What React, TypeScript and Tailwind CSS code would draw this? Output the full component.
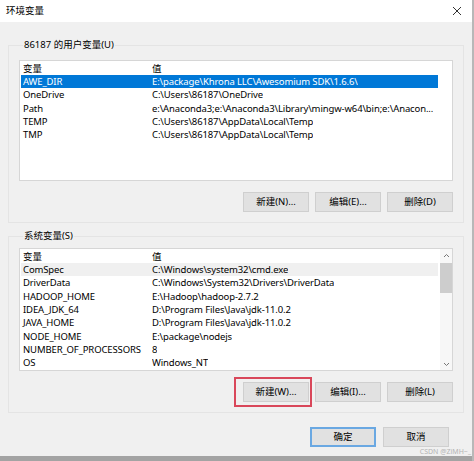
import React from 'react'

type Row = { name: string; value: string }

const USER_VARS: Row[] = [
  { name: 'AWE_DIR', value: 'E:\\package\\Khrona LLC\\Awesomium SDK\\1.6.6\\' },
  { name: 'OneDrive', value: 'C:\\Users\\86187\\OneDrive' },
  { name: 'Path', value: 'e:\\Anaconda3;e:\\Anaconda3\\Library\\mingw-w64\\bin;e:\\Anacon...' },
  { name: 'TEMP', value: 'C:\\Users\\86187\\AppData\\Local\\Temp' },
  { name: 'TMP', value: 'C:\\Users\\86187\\AppData\\Local\\Temp' },
]

const SYSTEM_VARS: Row[] = [
  { name: 'ComSpec', value: 'C:\\Windows\\system32\\cmd.exe' },
  { name: 'DriverData', value: 'C:\\Windows\\System32\\Drivers\\DriverData' },
  { name: 'HADOOP_HOME', value: 'E:\\Hadoop\\hadoop-2.7.2' },
  { name: 'IDEA_JDK_64', value: 'D:\\Program Files\\Java\\jdk-11.0.2' },
  { name: 'JAVA_HOME', value: 'D:\\Program Files\\Java\\jdk-11.0.2' },
  { name: 'NODE_HOME', value: 'E:\\package\\nodejs' },
  { name: 'NUMBER_OF_PROCESSORS', value: '8' },
  { name: 'OS', value: 'Windows_NT' },
]

function Button({ label, primary = false }: { label: string; primary?: boolean }) {
  return (
    <div
      className={
        primary
          ? 'flex h-[20px] w-[66px] items-center justify-center border-2 border-[#6aa8e2] bg-[#e1e1e1] text-[9.5px] leading-[14px] text-black'
          : 'flex h-[20px] w-[66px] items-center justify-center border border-[#cfcfcf] bg-[#e1e1e1] text-[9.5px] leading-[14px] text-black'
      }
    >
      {label}
    </div>
  )
}

function VarList({
  rows,
  height,
  selected,
  hover,
  scroll = false,
}: {
  rows: Row[]
  height: string
  selected?: number
  hover?: number
  scroll?: boolean
}) {
  return (
    <div className={`relative flex border border-[#d6d6d6] bg-white ${height}`}>
      <div className="flex flex-1 flex-col overflow-hidden pl-[1px] pt-[1px] text-[9.5px] tracking-[-0.12px]">
        <div className="flex h-[13px] items-center leading-[13px]">
          <div className="w-[131px] pl-[2px]">变量</div>
          <div>值</div>
        </div>
        {rows.map((r, i) => (
          <div
            key={r.name}
            className={
              i === selected
                ? 'flex h-[13.3px] w-[417px] items-center bg-[#0078d7] leading-[13px] text-white'
                : i === hover
                  ? 'flex h-[13.3px] w-[417px] items-center bg-[#f0f0f0] leading-[13px]'
                  : 'flex h-[13.3px] w-[417px] items-center leading-[13px]'
            }
          >
            <div className="w-[131px] shrink-0 pl-[2px] whitespace-nowrap">{r.name}</div>
            <div className="overflow-hidden whitespace-nowrap">{r.value}</div>
          </div>
        ))}
      </div>
      {scroll && (
        <div className="flex w-[12px] flex-col items-center bg-[#f7f7f7]">
          <svg width="7" height="10" viewBox="0 0 7 10" className="mt-[2px]">
            <path d="M1 6 L3.5 3.5 L6 6" fill="none" stroke="#777" strokeWidth="1" />
          </svg>
          <div className="mt-[2px] h-[30px] w-[12px] bg-[#cdcdcd]" />
          <div className="flex-1" />
          <svg width="7" height="10" viewBox="0 0 7 10" className="mb-[1px]">
            <path d="M1 4 L3.5 6.5 L6 4" fill="none" stroke="#777" strokeWidth="1" />
          </svg>
        </div>
      )}
    </div>
  )
}

export default function App() {
  return (
    <div className="relative flex h-[461px] w-[474px] overflow-hidden bg-[#a3a3a3] font-['Noto_Sans','Noto_Sans_CJK_SC',sans-serif] text-[9.5px] leading-none text-black">
      <div className="flex h-[456px] w-[472px] flex-col bg-[#f0f0f0]">
        {/* 标题栏 */}
        <div className="flex h-[22px] items-center justify-between bg-white pl-[6px] pr-[10px]">
          <span className="leading-[14px]">环境变量</span>
          <svg width="10" height="10" viewBox="0 0 10 10">
            <path d="M1 1 L9 9 M9 1 L1 9" stroke="#333" strokeWidth="1" />
          </svg>
        </div>

        {/* 用户变量 */}
        <fieldset className="mx-[8px] mt-[15px] border border-[#e4e4e4] px-[10px] pb-[10px]">
          <legend className="ml-[4px] h-[16px] px-[1px] leading-[16px]">86187 的用户变量(U)</legend>
          <div className="mt-[7px]">
            <VarList rows={USER_VARS} height="h-[121px]" selected={0} />
          </div>
          <div className="mt-[11px] flex justify-end gap-[6px]">
            <Button label="新建(N)..." />
            <Button label="编辑(E)..." />
            <Button label="删除(D)" />
          </div>
        </fieldset>

        {/* 系统变量 */}
        <fieldset className="mx-[8px] mt-[5px] border border-[#e4e4e4] px-[10px] pb-[10px]">
          <legend className="ml-[4px] h-[16px] px-[1px] leading-[16px]">系统变量(S)</legend>
          <div className="mt-[4px]">
            <VarList rows={SYSTEM_VARS} height="h-[123px]" hover={0} scroll />
          </div>
          <div className="mt-[11px] flex justify-end gap-[6px]">
            <div className="relative">
              <Button label="新建(W)..." />
              <div className="pointer-events-none absolute -bottom-[5px] -left-[9px] -right-[3px] -top-[5px] border-2 border-[#d9475a]" />
            </div>
            <Button label="编辑(I)..." />
            <Button label="删除(L)" />
          </div>
        </fieldset>

        <div className="mt-[14px] flex justify-end gap-[7px] pr-[23px]">
          <Button label="确定" primary />
          <Button label="取消" />
        </div>
      </div>
      <div className="h-full w-[2px] bg-[#b8b8b8]" />
      <span className="absolute bottom-[5px] right-[3px] text-[7px] leading-[8px] text-[#b4b4b4]">CSDN @ZiMH~_</span>
    </div>
  )
}
